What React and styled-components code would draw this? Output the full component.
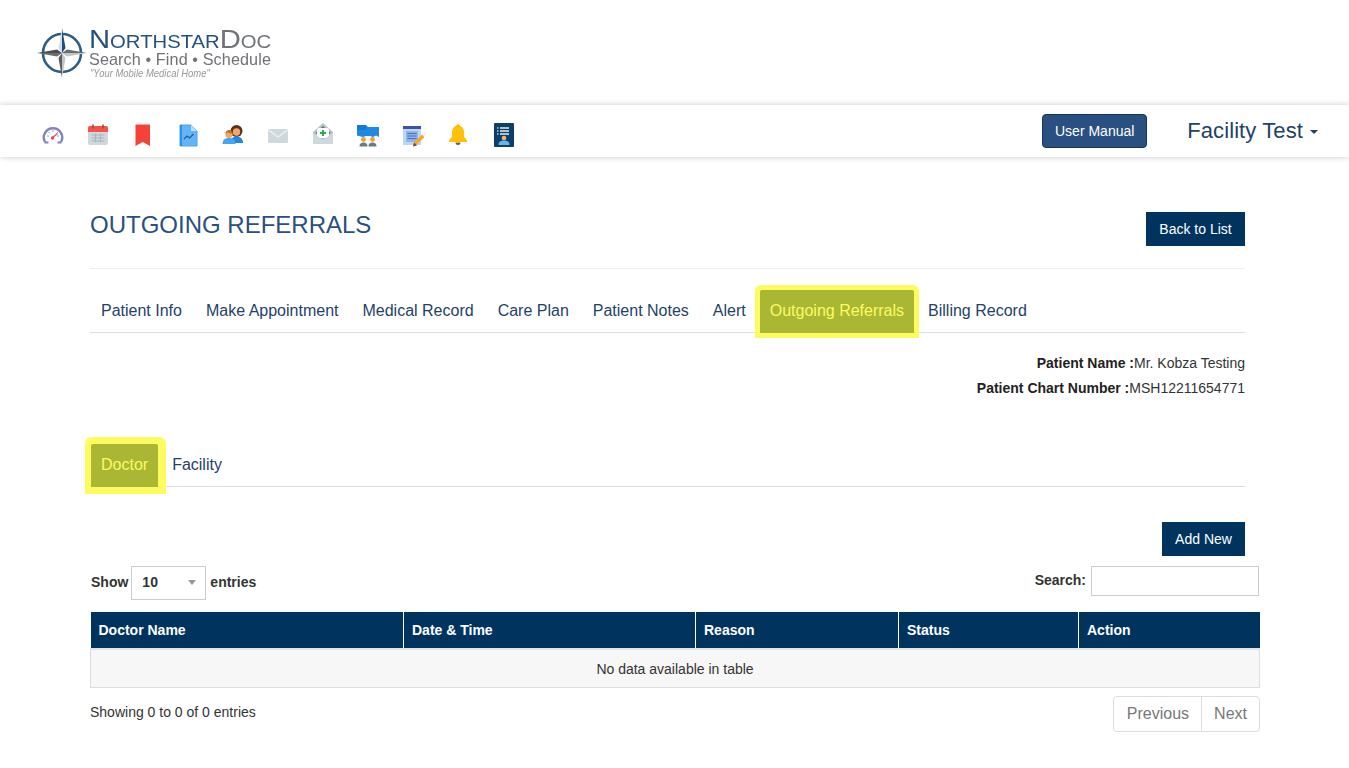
import React from 'react';
import styled, { createGlobalStyle } from 'styled-components';

const Global = createGlobalStyle`
  html, body { margin: 0; padding: 0; background: #fff; }
  body { font-family: "Liberation Sans", Arial, sans-serif; font-size: 14px; color: #333; }
  * { box-sizing: border-box; }
`;
const Page = styled.div`width: 1349px; height: 768px; overflow: hidden; background: #fff;`;
const Header = styled.header`height: 105px; padding: 28px 0 0 37px; display: flex; align-items: flex-start;`;
const Logo = styled.div`display: flex; gap: 2px; filter: blur(0.35px);`;
const LogoText = styled.div`display: flex; flex-direction: column; margin-top: -1px;`;
const Brand = styled.div`
  font-size: 26px; line-height: 24px; font-variant: small-caps; color: #24527e; white-space: nowrap;
  transform: scaleX(1.125); transform-origin: left;
  span { color: #6f7276; }
`;
const Slogan = styled.div`font-size: 16.2px; line-height: 16px; color: #6f7276; white-space: nowrap; letter-spacing: 0.1px;`;
const Motto = styled.div`font-size: 11px; line-height: 12px; font-style: italic; color: #999; white-space: nowrap; transform: scaleX(.86); transform-origin: left; margin-left: 1px;`;
const NavBar = styled.nav`
  height: 52px; background: #fff; display: flex; align-items: center; justify-content: space-between;
  box-shadow: 0 0 6px rgba(0,0,0,.22); padding: 0 31px 0 42px; position: relative;
`;
const IconRow = styled.div`display: flex; gap: 23px; align-items: center; padding-top: 7px;`;
const IconSlot = styled.a`width: 22px; height: 24px; display: block; svg { display: block; width: 22px; height: 24px; }`;
const NavRight = styled.div`display: flex; align-items: center; gap: 40px;`;
const ManualButton = styled.button`
  width: 105px; height: 34px; background: #2a5082; border: 1px solid #13365f; border-radius: 4px; color: #fff;
  font: 14px "Liberation Sans", Arial, sans-serif; padding: 0;
`;
const UserMenu = styled.div`display: flex; align-items: center; gap: 7px; color: #1f4268; font-size: 22px; line-height: 30px; letter-spacing: .1px; margin-top: -1px;`;
const Caret = styled.span`width: 0; height: 0; border-top: 4px solid #1f4268; border-left: 4px solid transparent; border-right: 4px solid transparent; margin-top: 3px;`;
const Content = styled.main`width: 1155px; margin-left: 90px;`;
const TitleRow = styled.div`
  height: 112px; padding-top: 55px; display: flex; justify-content: space-between; align-items: flex-start;
  border-bottom: 1px solid #eee;
`;
const Title = styled.h1`margin: 1px 0 0; font-size: 24px; line-height: 24px; font-weight: 400; color: #2a5082;`;
const DarkButton = styled.button`
  height: 34px; width: ${p => p.$w}px; padding: 0; background: #00345f; border: 0; color: #fff; font: 14px "Liberation Sans", Arial, sans-serif;
`;
const Tabs = styled.div`display: flex; gap: 2px; border-bottom: 1px solid #ddd; height: ${p => p.$h}px; align-items: flex-end;`;
const Tab = styled.a`
  height: 43px; margin-bottom: -1px; padding: 0 11px 2px; display: flex; align-items: center; font-size: 16px; color: #1f4268; white-space: nowrap;
  ${p => p.$active && `
    padding: 0 10px 2px; margin-left: 1px; margin-right: 1px;
    background: #a9b735; color: #fdfb5f; border-radius: 2px 2px 0 0; box-shadow: ${p.$ringX}px 0 0 ${p.$ring}px #fdfb5f; position: relative;
  `}
`;
const InfoBlock = styled.div`text-align: right; padding-top: 18px; font-size: 14px; line-height: 25px; color: #333; height: 87px; b { color: #222; }`;
const Actions = styled.div`display: flex; justify-content: flex-end; margin-top: 35px;`;
const Controls = styled.div`width: 1169px; display: flex; justify-content: space-between; align-items: flex-start; margin-top: 10px; font-weight: bold; font-size: 14px; color: #333;`;
const Length = styled.div`display: flex; align-items: center; gap: 3px; height: 34px; padding-left: 1px;`;
const ControlLabel = styled.span`margin-top: -2px;`;
const FakeSelect = styled.div`
  width: 75px; height: 34px; border: 1px solid #ccc; padding: 0 10px 2px; margin-right: 1px; display: flex; align-items: center; justify-content: space-between; font-weight: bold; color: #333;
  i { width: 0; height: 0; border-top: 5px solid #999; border-left: 4px solid transparent; border-right: 4px solid transparent; margin-right: -1px; }
`;
const SearchBox = styled.div`display: flex; align-items: center; gap: 5px; height: 30px;`;
const SearchInput = styled.input`width: 168px; height: 30px; border: 1px solid #ccc; background: #fff; padding: 0 6px;`;
const Table = styled.table`width: 1169px; margin-top: 12px; border-collapse: collapse; table-layout: fixed; font-size: 14px;`;
const Th = styled.th`
  height: 37px; background: #00345f; color: #fff; text-align: left; padding: 0 8px; font-weight: bold;
  border-left: 1px solid #fff; width: ${p => p.$w}px; &:first-child { border-left: 0; }
`;
const EmptyCell = styled.td`
  height: 38px; padding: 2px 0 0; background: #f7f7f7; border: 1px solid #ddd; border-top: 2px solid #e4e4e4; text-align: center; color: #333;
`;
const Footer = styled.div`width: 1170px; display: flex; justify-content: space-between; align-items: flex-start; margin-top: 8px; color: #333;`;
const FooterInfo = styled.div`padding-top: 7px; line-height: 18px;`;
const Pager = styled.div`display: flex; height: 36px; border: 1px solid #ddd; border-radius: 4px; background: #fff;`;
const PageBtn = styled.a`
  padding: 0 12px 0 13px; display: flex; align-items: center; font-size: 16px; color: #777;
  & + & { border-left: 1px solid #ddd; padding: 0 12px; }
`;

const Compass = () => (
  <svg width="50" height="50" viewBox="0 0 50 50">
    <circle cx="25" cy="25" r="19" fill="none" stroke="#2f5d85" strokeWidth="2.600" />
    <path d="M25 0 L28.500 20 L25 25Z" fill="#1d4f7c" />
    <path d="M25 0 L21.500 20 L25 25Z" fill="#d5dde4" />
    <path d="M50 25 L30 21.500 L25 25Z" fill="#6a6d70" />
    <path d="M50 25 L30 28.500 L25 25Z" fill="#c3c4c6" />
    <path d="M25 50 L21.500 30 L25 25Z" fill="#5c5f62" />
    <path d="M25 50 L28.500 30 L25 25Z" fill="#c3c4c6" />
    <path d="M0 25 L20 28.500 L25 25Z" fill="#6a6d70" />
    <path d="M0 25 L20 21.500 L25 25Z" fill="#4c4f52" />
  </svg>
);

const Gauge = () => (
  <svg viewBox="0 0 22 24">
    <path d="M3 19 A9.200 9.200 0 1 1 19 19" fill="#fff" stroke="#7e85c5" strokeWidth="2.400" />
    <path d="M2.500 19.500h4M15.500 19.500h4" stroke="#7e85c5" strokeWidth="2" />
    <path d="M5 13h2M11 7v2M16 9l-1.500 1.500M15 13h2M6.500 9l1.500 1.500" stroke="#9aa0cf" strokeWidth="1" />
    <path d="M10 15L15.500 10.500" stroke="#f0506e" strokeWidth="1.600" />
    <circle cx="10.500" cy="15" r="1.700" fill="#e8455f" />
  </svg>
);
const Calendar = () => (
  <svg viewBox="0 0 22 24">
    <rect x="1" y="3" width="20" height="19" rx="2" fill="#cfd8dc" />
    <path d="M1 9V5a2 2 0 0 1 2-2h16a2 2 0 0 1 2 2v4z" fill="#f25449" />
    <path d="M6 1.500v4M16 1.500v4" stroke="#b23b33" strokeWidth="1.500" />
    <path d="M4.500 12h13M4.500 15h13M4.500 18h13" stroke="#a9b5bb" strokeWidth="1.200" />
    <path d="M8.500 10.500v9M13.500 10.500v9" stroke="#a9b5bb" strokeWidth="1" />
  </svg>
);
const Bookmark = () => (
  <svg viewBox="0 0 22 24"><path d="M3.500 1.500h14.500v21.500l-7.250-4-7.250 4z" fill="#f44336" /></svg>
);
const Doc = () => (
  <svg viewBox="0 0 22 24">
    <path d="M3 2h11l6 6v15H3z" fill="#64b5f6" stroke="#42a5f5" />
    <path d="M3 2h2v21H3z" fill="#2f8fe8" />
    <path d="M14 2l6 6h-6z" fill="#bbdefb" />
    <path d="M7 16l3-3 2.500 2 4-4" stroke="#1a5ca8" strokeWidth="1.300" fill="none" />
  </svg>
);
const People = () => (
  <svg viewBox="0 0 22 24">
    <circle cx="14.500" cy="8" r="6" fill="#5d3217" />
    <circle cx="14.500" cy="9" r="3.700" fill="#f4a56a" />
    <path d="M8.500 20c0-5 3-6.500 6-6.500s6.500 1.500 6.500 6.500z" fill="#1e88e5" />
    <circle cx="7" cy="11.500" r="3.600" fill="#f6a75f" />
    <path d="M3.500 11c0-3 1.500-4 3.500-4s3.500 1.200 3.500 3.500c-2 0-4-.5-5-1.500-.5 1-1 1.500-2 2z" fill="#b5732d" />
    <path d="M.5 21c0-4.500 3-6 6.500-6s6.500 1.500 6.500 6z" fill="#42a5f5" />
  </svg>
);
const Mail = () => (
  <svg viewBox="0 0 22 24">
    <rect x="1" y="6" width="20" height="14" rx="1.500" fill="#cfd8dc" />
    <path d="M1.500 7l9.500 7 9.500-7" fill="none" stroke="#eef2f3" strokeWidth="1.300" />
  </svg>
);
const MailPlus = () => (
  <svg viewBox="0 0 22 24">
    <path d="M1 9L11 0l10 9v12H1z" fill="#b8c3c8" />
    <path d="M3.500 10L11 3l7.500 7-7.500 5z" fill="#5d6f78" />
    <rect x="5" y="5" width="12" height="10" rx="2" fill="#fff" />
    <path d="M1 10l10 7 10-7v11H1z" fill="#cfd8dc" />
    <circle cx="11" cy="10" r="3.800" fill="#fff" />
    <path d="M11 7v6M8 10h6" stroke="#2fa84f" strokeWidth="2" />
  </svg>
);
const Team = () => (
  <svg viewBox="0 0 22 24">
    <path d="M0 2h9l2 2h11v10l-3-1.500-3 1.500-3-1H9l-3 1-6-1.500z" fill="#1e88e5" />
    <rect x="0" y="2" width="9" height="5" fill="#1976d2" />
    <circle cx="6.500" cy="16.500" r="2.400" fill="#f59b3f" />
    <circle cx="15.500" cy="16.500" r="2.400" fill="#f59b3f" />
    <path d="M2.500 23.500c0-3 1.500-4 4-4s4 1 4 4zM11.500 23.500c0-3 1.500-4 4-4s4 1 4 4z" fill="#6b7a82" />
  </svg>
);
const Note = () => (
  <svg viewBox="0 0 22 24">
    <rect x="1" y="3" width="18" height="19" fill="#bbd7f7" />
    <rect x="1" y="3" width="18" height="3" fill="#3f51a5" />
    <rect x="4" y="8" width="12" height="11" fill="#90b4e8" />
    <path d="M5.500 10.500h9M5.500 13h9M5.500 15.500h9" stroke="#4f6fb8" strokeWidth="1" />
    <path d="M11 23.500l1-4 8-8 2.500 2.500-8 8z" fill="#f9a825" />
    <path d="M11 23.500l1-4 3 3z" fill="#6d4c41" />
  </svg>
);
const Bell = () => (
  <svg viewBox="0 0 22 24">
    <path d="M11 2.500c-4 0-6 3-6 7v4l-3 4v1.500h18V17.500l-3-4v-4c0-4-2-7-6-7z" fill="#ffc107" />
    <circle cx="11" cy="3" r="1.700" fill="#ffb300" />
    <path d="M8.500 19.500h5a2.500 2.500 0 0 1-5 0z" fill="#8d5a2b" />
  </svg>
);
const Chart = () => (
  <svg viewBox="0 0 22 24">
    <rect x="2" y="0" width="20" height="24" rx="1" fill="#0f3f66" />
    <path d="M8 5h9M8 8h9M8 11h9" stroke="#e3edf3" strokeWidth="1.500" />
    <path d="M5 5h1.500M5 8h1.500M5 11h1.500" stroke="#bcd" strokeWidth="1.500" />
    <circle cx="12" cy="15" r="2.300" fill="#f6b26b" />
    <path d="M6.500 22c0-3.500 2.500-4.500 5.500-4.500s5.500 1 5.500 4.500z" fill="#64b5f6" />
  </svg>
);

const icons = [Gauge, Calendar, Bookmark, Doc, People, Mail, MailPlus, Team, Note, Bell, Chart];
const mainTabs = ['Patient Info', 'Make Appointment', 'Medical Record', 'Care Plan', 'Patient Notes', 'Alert', 'Outgoing Referrals', 'Billing Record'];
const columns = [['Doctor Name', 313], ['Date & Time', 292], ['Reason', 203], ['Status', 180], ['Action', 181]];

export default function App() {
  return (
    <Page>
      <Global />
      <Header>
        <Logo>
          <Compass />
          <LogoText>
            <Brand>Northstar<span>Doc</span></Brand>
            <Slogan>Search • Find • Schedule</Slogan>
            <Motto>"Your Mobile Medical Home"</Motto>
          </LogoText>
        </Logo>
      </Header>
      <NavBar>
        <IconRow>
          {icons.map((I, i) => <IconSlot key={i}><I /></IconSlot>)}
        </IconRow>
        <NavRight>
          <ManualButton>User Manual</ManualButton>
          <UserMenu>Facility Test <Caret /></UserMenu>
        </NavRight>
      </NavBar>
      <Content>
        <TitleRow>
          <Title>OUTGOING REFERRALS</Title>
          <DarkButton $w={99}>Back to List</DarkButton>
        </TitleRow>
        <Tabs $h={64}>
          {mainTabs.map(t => <Tab key={t} $active={t === 'Outgoing Referrals'} $ring={5} $ringX={0}>{t}</Tab>)}
        </Tabs>
        <InfoBlock>
          <div><b>Patient Name :</b>Mr. Kobza Testing</div>
          <div><b>Patient Chart Number :</b>MSH12211654771</div>
        </InfoBlock>
        <Tabs $h={67}>
          <Tab $active $ring={7} $ringX={1}>Doctor</Tab>
          <Tab>Facility</Tab>
        </Tabs>
        <Actions><DarkButton $w={83}>Add New</DarkButton></Actions>
        <Controls>
          <Length><ControlLabel>Show</ControlLabel><FakeSelect>10<i /></FakeSelect><ControlLabel>entries</ControlLabel></Length>
          <SearchBox><ControlLabel>Search:</ControlLabel><SearchInput /></SearchBox>
        </Controls>
        <Table>
          <thead>
            <tr>{columns.map(([c, w]) => <Th key={c} $w={w}>{c}</Th>)}</tr>
          </thead>
          <tbody>
            <tr><EmptyCell colSpan={5}>No data available in table</EmptyCell></tr>
          </tbody>
        </Table>
        <Footer>
          <FooterInfo>Showing 0 to 0 of 0 entries</FooterInfo>
          <Pager>
            <PageBtn>Previous</PageBtn>
            <PageBtn>Next</PageBtn>
          </Pager>
        </Footer>
      </Content>
    </Page>
  );
}
